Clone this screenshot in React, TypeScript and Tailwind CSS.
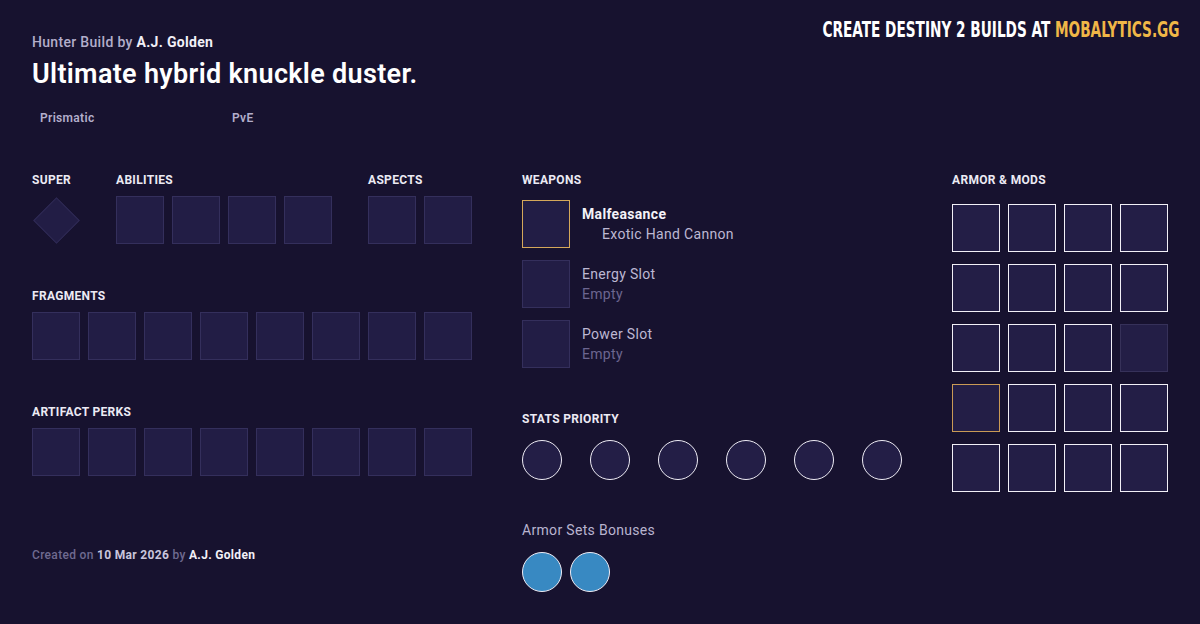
import React from 'react';

const box = 'w-12 h-12 bg-[#221d45] border border-[#342f5c]';

function Label({ children }: { children: React.ReactNode }) {
  return <div className="text-xs leading-4 font-bold uppercase text-[#eceaf4]">{children}</div>;
}

function BoxRow({ count }: { count: number }) {
  return (
    <div className="flex gap-2">
      {Array.from({ length: count }).map((_, i) => (
        <div key={i} className={box} />
      ))}
    </div>
  );
}

const weapons = [
  { name: 'Malfeasance', sub: 'Exotic Hand Cannon', exotic: true },
  { name: 'Energy Slot', sub: 'Empty', exotic: false },
  { name: 'Power Slot', sub: 'Empty', exotic: false },
];

// armor grid: 5 rows x 4 cols, a few slots styled differently
const armorBorder = (i: number) => {
  if (i === 11) return 'border-[#363159]';
  if (i === 12) return 'border-[#c99a55]';
  return 'border-[#f2f0f7]';
};

export default function App() {
  return (
    <div
      className="w-[1200px] h-[624px] bg-[#17122f] overflow-hidden pl-8 pr-5 text-[#b9b4cf] tracking-[0.02em]"
      style={{ fontFamily: 'Roboto, "Liberation Sans", sans-serif' }}
    >
      {/* Header */}
      <div className="flex justify-between items-start">
        <div className="pt-8">
          <div className="text-sm leading-5 font-medium text-[#b3aecb]">
            Hunter Build by <span className="font-bold text-[#f2f0f7]">A.J. Golden</span>
          </div>
          <h1 className="mt-[6px] text-[27px] leading-8 font-semibold text-white">Ultimate hybrid knuckle duster.</h1>
          <div className="mt-5 flex text-xs leading-4 font-semibold text-[#b3aecb]">
            <span className="w-[200px] pl-2">Prismatic</span>
            <span>PvE</span>
          </div>
        </div>
        <div
          className="pt-[18px] text-[22px] leading-6 font-bold uppercase tracking-normal text-white whitespace-nowrap origin-right scale-x-[0.69]"
          style={{ fontFamily: '"Liberation Sans Narrow", "DejaVu Sans Condensed", sans-serif' }}
        >
          Create Destiny 2 builds at <span className="text-[#f0b747]">Mobalytics.gg</span>
        </div>
      </div>

      {/* Body */}
      <div className="mt-[46px] flex">
        {/* Left column */}
        <div className="w-[440px] flex flex-col">
          <div className="flex gap-9">
            <div>
              <Label>Super</Label>
              <div className="mt-2 w-12 h-12 flex items-center justify-center">
                <div className="w-[33px] h-[33px] rotate-45 bg-[#221d45] border border-[#2f2a55]" />
              </div>
            </div>
            <div>
              <Label>Abilities</Label>
              <div className="mt-2">
                <BoxRow count={4} />
              </div>
            </div>
            <div>
              <Label>Aspects</Label>
              <div className="mt-2">
                <BoxRow count={2} />
              </div>
            </div>
          </div>

          <div className="mt-[44px]">
            <Label>Fragments</Label>
            <div className="mt-2">
              <BoxRow count={8} />
            </div>
          </div>

          <div className="mt-[44px]">
            <Label>Artifact Perks</Label>
            <div className="mt-2">
              <BoxRow count={8} />
            </div>
          </div>

          <div className="mt-[71px] text-xs leading-4 font-medium text-[#6f6a90]">
            Created on <span className="font-bold text-[#c9c5dc]">10 Mar 2026</span> by{' '}
            <span className="font-bold text-[#f2f0f7]">A.J. Golden</span>
          </div>
        </div>

        {/* Middle column */}
        <div className="ml-[50px] w-[380px]">
          <Label>Weapons</Label>
          <div className="mt-3 flex flex-col gap-3">
            {weapons.map((w) => (
              <div key={w.name} className="flex gap-3">
                <div className={`w-12 h-12 bg-[#221d45] border ${w.exotic ? 'border-[#d5a85a]' : 'border-[#342f5c]'}`} />
                <div className="pt-1 text-sm leading-5">
                  <div className={w.exotic ? 'font-bold text-[#f4f2f8]' : 'text-[#bdb8d3]'}>{w.name}</div>
                  <div className={w.exotic ? 'pl-5 text-[#bdb8d3]' : 'text-[#6c6690]'}>{w.sub}</div>
                </div>
              </div>
            ))}
          </div>

          <div className="mt-[43px]">
            <Label>Stats Priority</Label>
            <div className="mt-[13px] flex gap-7">
              {Array.from({ length: 6 }).map((_, i) => (
                <div key={i} className="w-10 h-10 rounded-full bg-[#231e46] border border-[#eeecf5]" />
              ))}
            </div>
          </div>

          <div className="mt-10 text-sm leading-5 text-[#b9b4cf]">Armor Sets Bonuses</div>
          <div className="mt-3 flex gap-2">
            {Array.from({ length: 2 }).map((_, i) => (
              <div key={i} className="w-10 h-10 rounded-full bg-[#3889c2] border border-[#eeecf5]" />
            ))}
          </div>
        </div>

        {/* Right column */}
        <div className="ml-[50px]">
          <Label>Armor &amp; Mods</Label>
          <div className="mt-4 grid grid-cols-4 gap-x-2 gap-y-3">
            {Array.from({ length: 20 }).map((_, i) => (
              <div key={i} className={`w-12 h-12 bg-[#231e46] border ${armorBorder(i)}`} />
            ))}
          </div>
        </div>
      </div>
    </div>
  );
}
